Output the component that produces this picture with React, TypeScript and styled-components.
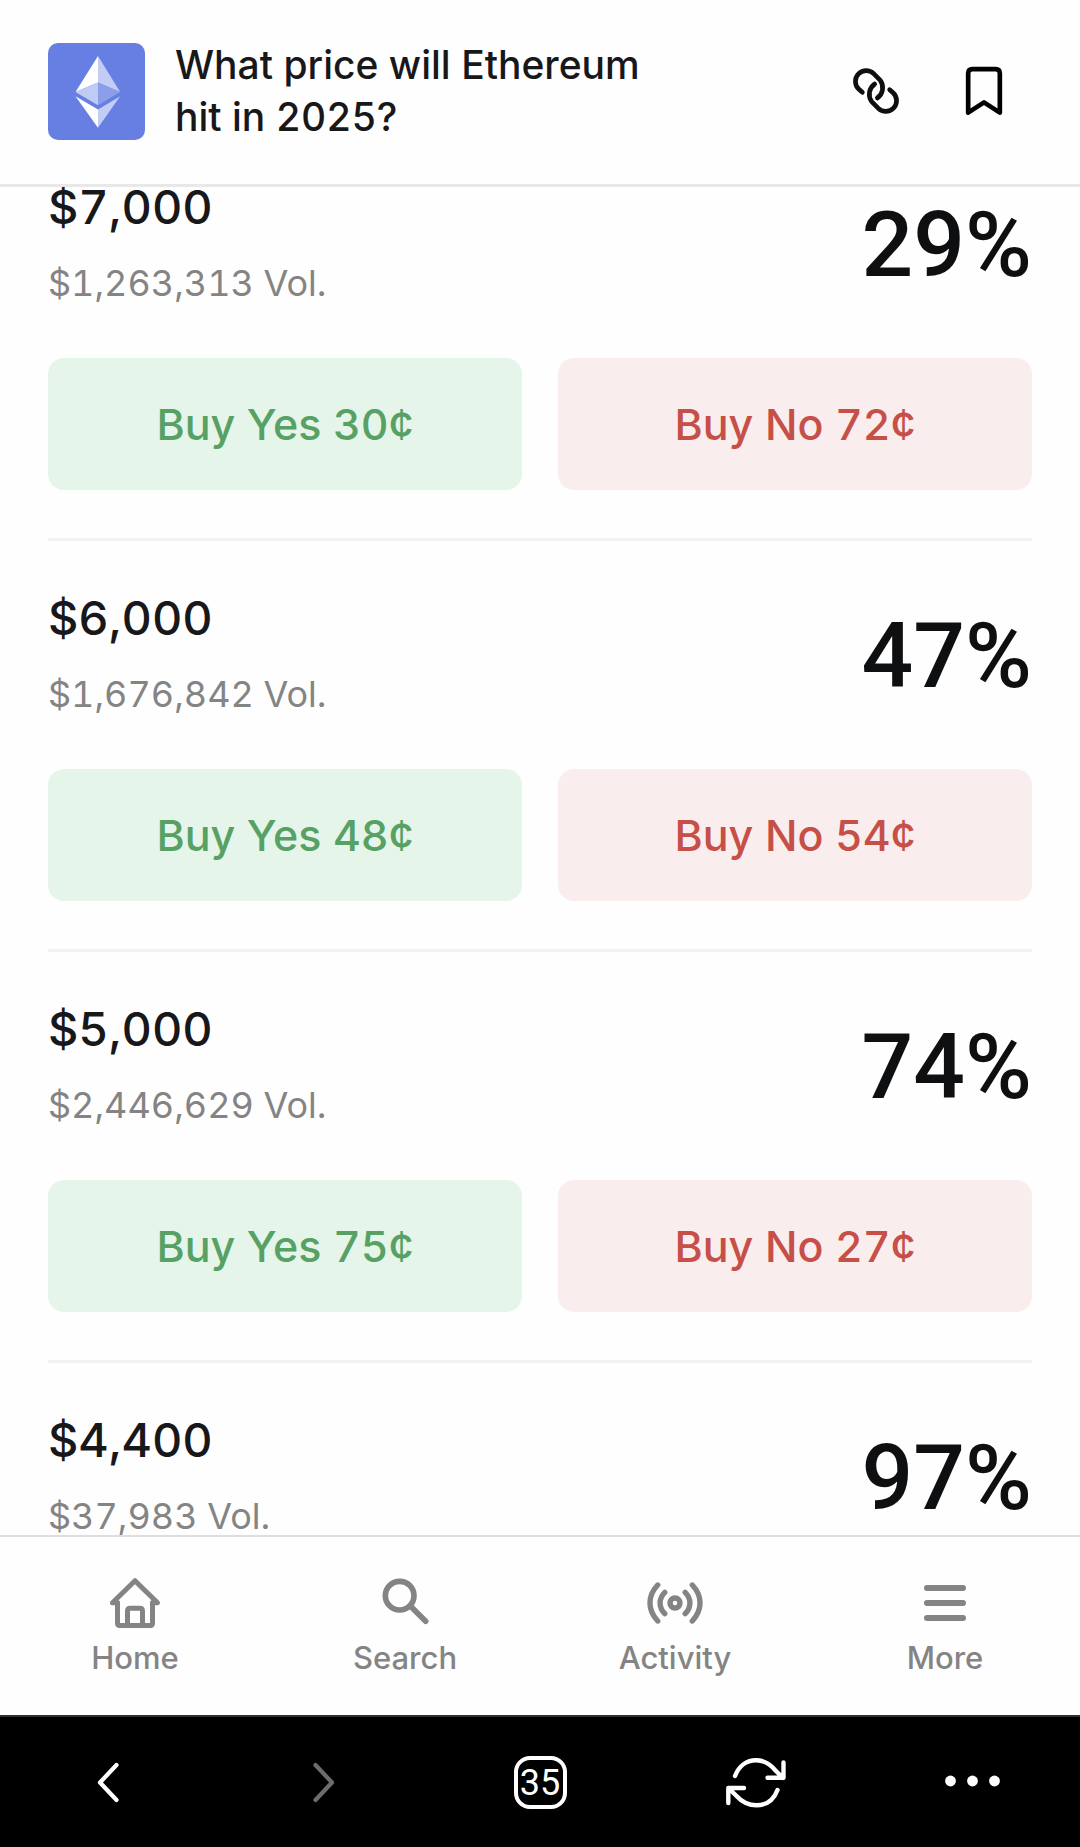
import React from 'react';
import styled, { createGlobalStyle } from 'styled-components';

const GlobalStyle = createGlobalStyle`
  *, *::before, *::after { box-sizing: border-box; }
  body {
    margin: 0;
    background: #fefefe;
    color: #18181a;
    font-family: Inter, "Liberation Sans", sans-serif;
    font-weight: 500;
    font-variant-numeric: tabular-nums;
  }
  h1, h2, p { margin: 0; font-weight: inherit; }
  button {
    border: 0;
    padding: 0;
    background: none;
    color: inherit;
    font: inherit;
    cursor: pointer;
  }
  svg { display: block; overflow: visible; }
`;

const Screen = styled.div`
  display: flex;
  flex-direction: column;
  height: 100vh;
`;

const Header = styled.header`
  display: flex;
  align-items: center;
  gap: 30px;
  padding: 39px 48px 41px;
  border-bottom: 3px solid #e8e8e8;
`;

const Title = styled.h1`
  flex: 1;
  max-width: 480px;
  font-size: 39px;
  line-height: 52px;
`;

const HeaderActions = styled.div`
  display: flex;
  gap: 12px;
  margin-left: auto;
`;

const IconButton = styled.button`
  display: flex;
  align-items: center;
  justify-content: center;
  width: 96px;
  height: 96px;
  color: #0e0f11;
`;

const Markets = styled.main`
  flex: 1;
  min-height: 0;
  overflow: hidden;
  padding: 0 48px;
`;

const Market = styled.article`
  padding: 57px 0 48px;
  border-bottom: 3px solid #f1f1f1;
  &:first-child { padding-top: 0; }
  &:last-child { border-bottom: 0; }
`;

const Summary = styled.div`
  display: flex;
  align-items: center;
  justify-content: space-between;
`;

const Labels = styled.div`
  display: grid;
  gap: 36px;
`;

const Target = styled.h2`
  font-size: 47px;
  line-height: 40px;
`;

const Volume = styled.p`
  color: #848484;
  font-size: 36px;
  font-weight: 400;
  line-height: 40px;
`;

const Chance = styled.p`
  color: #0e0f11;
  font-family: Roboto, sans-serif;
  font-size: 91px;
  line-height: 96px;
`;

const Trades = styled.div`
  display: grid;
  grid-template-columns: 1fr 1fr;
  gap: 36px;
  margin-top: 55px;
`;

const TradeButton = styled.button<{ $side: 'yes' | 'no' }>`
  && {
    height: 132px;
    border-radius: 16px;
    background: ${(p) => (p.$side === 'yes' ? '#e5f5ea' : '#f9eded')};
    color: ${(p) => (p.$side === 'yes' ? '#58a164' : '#c64f48')};
    font-size: 43px;
  }
`;

const Tabs = styled.nav`
  display: grid;
  grid-template-columns: repeat(4, 1fr);
  border-top: 2px solid #dedede;
`;

const Tab = styled.a`
  display: flex;
  flex-direction: column;
  align-items: center;
  gap: 8px;
  padding: 39px 0 37px;
  color: #848484;
  font-size: 31px;
  line-height: 40px;
  text-decoration: none;
`;

const BrowserBar = styled.footer`
  display: grid;
  grid-template-columns: repeat(5, 1fr);
  height: 132px;
  border-top: 2px solid #2e2e30;
  background: #000;
`;

const BrowserButton = styled.button`
  display: flex;
  align-items: center;
  justify-content: center;
  && { color: #fff; }
  &&:disabled { color: #6c6c6c; }
`;

const TabCount = styled.span`
  display: flex;
  align-items: center;
  justify-content: center;
  width: 53px;
  height: 53px;
  padding-top: 2px;
  border: 4px solid #fff;
  border-radius: 16px;
  font-family: Roboto, sans-serif;
  font-size: 36px;
  font-weight: 400;
  line-height: 44px;
`;

const EthereumLogo = () => (
  <svg width="97" height="97" viewBox="24 21 293 293" role="img" aria-label="Ethereum">
    <rect x="24" y="21" width="293" height="293" rx="30" fill="#677fe3" />
    <path d="M175 60 107 169 175 140Z" fill="#fff" />
    <path d="M175 60 242 169 175 140Z" fill="#c2cdf5" />
    <path d="M107 169 175 140V209Z" fill="#c0cbf5" />
    <path d="M242 169 175 140V209Z" fill="#8b9eea" />
    <path d="M107 182 175 222V277Z" fill="#fff" />
    <path d="M242 182 175 222V277Z" fill="#c2cdf5" />
  </svg>
);

const LinkIcon = () => (
  <svg width="46" height="46" viewBox="99 114 138 138" fill="none" stroke="currentColor" strokeWidth="14" strokeLinecap="round" strokeLinejoin="round">
    <path d="M127 187 116 177A32 32 0 0 1 161 131L181 151A38 38 0 0 1 172 204" />
    <path d="M209 179 220 189A32 32 0 0 1 175 235L155 215A38 38 0 0 1 164 162" />
  </svg>
);

const BookmarkIcon = () => (
  <svg width="36" height="48" viewBox="438 111 108 144" fill="none" stroke="#000" strokeWidth="14" strokeLinecap="round" strokeLinejoin="round">
    <path d="M444.500 248V130Q444.500 117.500 457 117.500H527Q539.500 117.500 539.500 130V248L492 217Z" />
  </svg>
);

const HomeIcon = () => (
  <svg width="54" height="54" viewBox="84 48 162 162" fill="none" stroke="currentColor" strokeWidth="15" strokeLinecap="round" strokeLinejoin="round">
    <path d="M112 128H97.500L165 62 232.500 128H218" />
    <path d="M112.500 128V190Q112.500 196.500 119 196.500H211Q217.500 196.500 217.500 190V128" />
    <path d="M142.500 194V153Q142.500 144.500 151 144.500H179Q187.500 144.500 187.500 153V194" />
  </svg>
);

const SearchIcon = () => (
  <svg width="54" height="54" viewBox="54 48 162 162" fill="none" stroke="currentColor" strokeWidth="17" strokeLinecap="round">
    <circle cx="119" cy="107" r="43" />
    <path d="M151 138 197 184" />
  </svg>
);

const ActivityIcon = () => (
  <svg width="54" height="54" viewBox="0 0 54 54" fill="none" stroke="currentColor" strokeWidth="5.400" strokeLinecap="round">
    <path d="M9.700 9C-.6 20-.6 34 9.700 45M44.300 9C54.600 20 54.600 34 44.300 45" />
    <path d="M16.800 16.300C10.500 22.500 10.500 31.500 16.800 37.700M37.200 16.300C43.500 22.500 43.500 31.500 37.200 37.700" />
    <circle cx="27" cy="27" r="5" />
  </svg>
);

const MenuIcon = () => (
  <svg width="54" height="54" viewBox="0 0 54 54" stroke="currentColor" strokeWidth="6" strokeLinecap="round">
    <path d="M9 12H45M9 27H45M9 42H45" />
  </svg>
);

const BackIcon = () => (
  <svg width="60" height="60" viewBox="0 0 60 60" fill="none" stroke="currentColor" strokeWidth="4.200" strokeLinecap="round" strokeLinejoin="round">
    <path d="M38.500 13 22 30.500 38.500 48" />
  </svg>
);

const ForwardIcon = () => (
  <svg width="60" height="60" viewBox="0 0 60 60" fill="none" stroke="currentColor" strokeWidth="4.200" strokeLinecap="round" strokeLinejoin="round">
    <path d="M21.500 13 38 30.500 21.500 48" />
  </svg>
);

const ReloadIcon = () => (
  <svg width="80" height="80" viewBox="0 0 80 80" fill="none" stroke="currentColor" strokeWidth="4.400" strokeLinecap="round" strokeLinejoin="round">
    <path d="M19 34C23 23.500 31 18.200 40 18.200C49 18.200 54 22 59 28L67 36M51.500 35.800H67.500V20.500" />
    <path d="M61.500 48C57.500 58.500 49.500 63.300 40.500 63.300C31.500 63.300 26 60 20.500 54L12.500 46M28 46H12.300V61" />
  </svg>
);

const DotsIcon = () => (
  <svg width="60" height="60" viewBox="0 0 60 60" fill="currentColor">
    <circle cx="8.500" cy="29" r="5.400" />
    <circle cx="30.500" cy="29" r="5.400" />
    <circle cx="52.500" cy="29" r="5.400" />
  </svg>
);

interface MarketData {
  target: string;
  volume: string;
  chance: string;
  yes?: string;
  no?: string;
}

const markets: MarketData[] = [
  { target: '$7,000', volume: '$1,263,313 Vol.', chance: '29%', yes: '30¢', no: '72¢' },
  { target: '$6,000', volume: '$1,676,842 Vol.', chance: '47%', yes: '48¢', no: '54¢' },
  { target: '$5,000', volume: '$2,446,629 Vol.', chance: '74%', yes: '75¢', no: '27¢' },
  { target: '$4,400', volume: '$37,983 Vol.', chance: '97%' },
];

const tabs = [
  { label: 'Home', Icon: HomeIcon },
  { label: 'Search', Icon: SearchIcon },
  { label: 'Activity', Icon: ActivityIcon },
  { label: 'More', Icon: MenuIcon },
];

export default function App() {
  return (
    <>
      <GlobalStyle />
      <Screen>
        <Header>
          <EthereumLogo />
          <Title>What price will Ethereum hit in 2025?</Title>
          <HeaderActions>
            <IconButton aria-label="Copy link"><LinkIcon /></IconButton>
            <IconButton aria-label="Bookmark"><BookmarkIcon /></IconButton>
          </HeaderActions>
        </Header>
        <Markets>
          {markets.map((m) => (
            <Market key={m.target}>
              <Summary>
                <Labels>
                  <Target>{m.target}</Target>
                  <Volume>{m.volume}</Volume>
                </Labels>
                <Chance>{m.chance}</Chance>
              </Summary>
              {m.yes && (
                <Trades>
                  <TradeButton $side="yes">Buy Yes {m.yes}</TradeButton>
                  <TradeButton $side="no">Buy No {m.no}</TradeButton>
                </Trades>
              )}
            </Market>
          ))}
        </Markets>
        <Tabs>
          {tabs.map(({ label, Icon }) => (
            <Tab key={label} href="#">
              <Icon />
              {label}
            </Tab>
          ))}
        </Tabs>
        <BrowserBar>
          <BrowserButton aria-label="Back"><BackIcon /></BrowserButton>
          <BrowserButton aria-label="Forward" disabled><ForwardIcon /></BrowserButton>
          <BrowserButton aria-label="Open tabs"><TabCount>35</TabCount></BrowserButton>
          <BrowserButton aria-label="Reload"><ReloadIcon /></BrowserButton>
          <BrowserButton aria-label="Menu"><DotsIcon /></BrowserButton>
        </BrowserBar>
      </Screen>
    </>
  );
}
